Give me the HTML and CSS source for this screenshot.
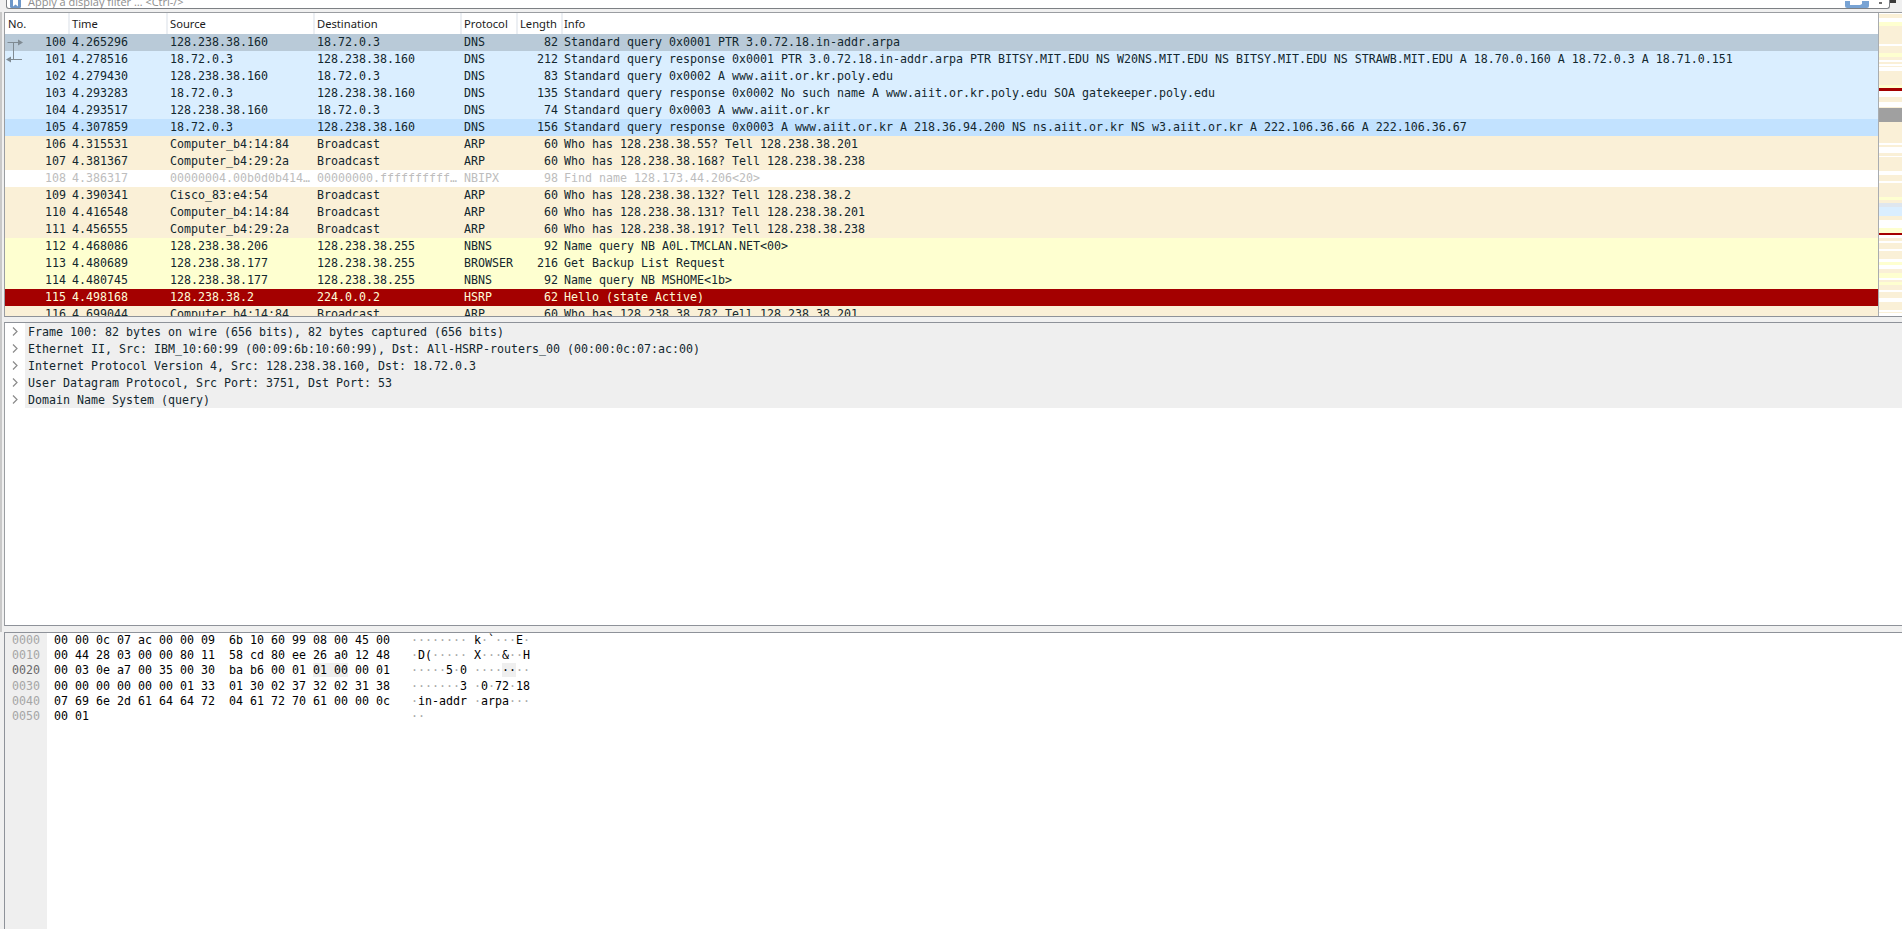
FILE: index.html
```html
<!DOCTYPE html>
<html lang="en">
<head>
<meta charset="utf-8">
<title>Wireshark</title>
<link rel="stylesheet" href="styles.css">
</head>
<body>
<div class="filterbar">
  <div class="filterbox">
    <svg class="bookmark" width="11" height="8" viewBox="0 0 11 8"><path d="M0 0h11v6.500a1.500 1.500 0 0 1-1.500 1.500h-8A1.500 1.500 0 0 1 0 6.500z" fill="#6d97c9"/><path d="M3 0h5v6.500L5.500 4.500 3 6.500z" fill="#fff"/></svg>
    <span class="placeholder">Apply a display filter … &lt;Ctrl-/&gt;</span>
    <svg class="applybtn" width="24" height="7" viewBox="0 0 24 7"><path d="M0 0h24v5a2 2 0 0 1-2 2H2a2 2 0 0 1-2-2z" fill="#78a3d4"/><path d="M5 0h12v3l-2 1H5z" fill="#fff"/></svg>
    <span class="dropdot"></span>
  </div>
  <span class="addbtn"></span>
</div>

<div class="upper">
  <section class="packets">
    <div class="plist">
      <div class="cols head"><span class="hno">No.</span><span>Time</span><span>Source</span><span>Destination</span><span>Protocol</span><span>Length</span><span class="hinfo">Info</span></div>
      <div class="cols row sel"><span class="no">100</span><span>4.265296</span><span>128.238.38.160</span><span>18.72.0.3</span><span>DNS</span><span class="len">82</span><span class="info">Standard query 0x0001 PTR 3.0.72.18.in-addr.arpa</span></div>
      <div class="cols row dns"><span class="no">101</span><span>4.278516</span><span>18.72.0.3</span><span>128.238.38.160</span><span>DNS</span><span class="len">212</span><span class="info">Standard query response 0x0001 PTR 3.0.72.18.in-addr.arpa PTR BITSY.MIT.EDU NS W20NS.MIT.EDU NS BITSY.MIT.EDU NS STRAWB.MIT.EDU A 18.70.0.160 A 18.72.0.3 A 18.71.0.151</span></div>
      <div class="cols row dns"><span class="no">102</span><span>4.279430</span><span>128.238.38.160</span><span>18.72.0.3</span><span>DNS</span><span class="len">83</span><span class="info">Standard query 0x0002 A www.aiit.or.kr.poly.edu</span></div>
      <div class="cols row dns"><span class="no">103</span><span>4.293283</span><span>18.72.0.3</span><span>128.238.38.160</span><span>DNS</span><span class="len">135</span><span class="info">Standard query response 0x0002 No such name A www.aiit.or.kr.poly.edu SOA gatekeeper.poly.edu</span></div>
      <div class="cols row dns"><span class="no">104</span><span>4.293517</span><span>128.238.38.160</span><span>18.72.0.3</span><span>DNS</span><span class="len">74</span><span class="info">Standard query 0x0003 A www.aiit.or.kr</span></div>
      <div class="cols row rel"><span class="no">105</span><span>4.307859</span><span>18.72.0.3</span><span>128.238.38.160</span><span>DNS</span><span class="len">156</span><span class="info">Standard query response 0x0003 A www.aiit.or.kr A 218.36.94.200 NS ns.aiit.or.kr NS w3.aiit.or.kr A 222.106.36.66 A 222.106.36.67</span></div>
      <div class="cols row arp"><span class="no">106</span><span>4.315531</span><span>Computer_b4:14:84</span><span>Broadcast</span><span>ARP</span><span class="len">60</span><span class="info">Who has 128.238.38.55? Tell 128.238.38.201</span></div>
      <div class="cols row arp"><span class="no">107</span><span>4.381367</span><span>Computer_b4:29:2a</span><span>Broadcast</span><span>ARP</span><span class="len">60</span><span class="info">Who has 128.238.38.168? Tell 128.238.38.238</span></div>
      <div class="cols row ign"><span class="no">108</span><span>4.386317</span><span>00000004.00b0d0b414…</span><span>00000000.ffffffffff…</span><span>NBIPX</span><span class="len">98</span><span class="info">Find name 128.173.44.206&lt;20&gt;</span></div>
      <div class="cols row arp"><span class="no">109</span><span>4.390341</span><span>Cisco_83:e4:54</span><span>Broadcast</span><span>ARP</span><span class="len">60</span><span class="info">Who has 128.238.38.132? Tell 128.238.38.2</span></div>
      <div class="cols row arp"><span class="no">110</span><span>4.416548</span><span>Computer_b4:14:84</span><span>Broadcast</span><span>ARP</span><span class="len">60</span><span class="info">Who has 128.238.38.131? Tell 128.238.38.201</span></div>
      <div class="cols row arp"><span class="no">111</span><span>4.456555</span><span>Computer_b4:29:2a</span><span>Broadcast</span><span>ARP</span><span class="len">60</span><span class="info">Who has 128.238.38.191? Tell 128.238.38.238</span></div>
      <div class="cols row smb"><span class="no">112</span><span>4.468086</span><span>128.238.38.206</span><span>128.238.38.255</span><span>NBNS</span><span class="len">92</span><span class="info">Name query NB A0L.TMCLAN.NET&lt;00&gt;</span></div>
      <div class="cols row smb"><span class="no">113</span><span>4.480689</span><span>128.238.38.177</span><span>128.238.38.255</span><span>BROWSER</span><span class="len">216</span><span class="info">Get Backup List Request</span></div>
      <div class="cols row smb"><span class="no">114</span><span>4.480745</span><span>128.238.38.177</span><span>128.238.38.255</span><span>NBNS</span><span class="len">92</span><span class="info">Name query NB MSHOME&lt;1b&gt;</span></div>
      <div class="cols row hsrp"><span class="no">115</span><span>4.498168</span><span>128.238.38.2</span><span>224.0.0.2</span><span>HSRP</span><span class="len">62</span><span class="info">Hello (state Active)</span></div>
      <div class="cols row arp"><span class="no">116</span><span>4.699044</span><span>Computer_b4:14:84</span><span>Broadcast</span><span>ARP</span><span class="len">60</span><span class="info">Who has 128.238.38.78? Tell 128.238.38.201</span></div>
      <svg class="related" width="20" height="26" viewBox="0 0 20 26"><path d="M1.500 4.500H13M7.500 4.500V21.500M4.500 21.500H16" fill="none" stroke="#7f8a92" stroke-width="1"/><path d="M12 1.500l5 3-5 3z" fill="#7f8a92"/><path d="M5 18.500l-5 3 5 3z" fill="#7f8a92"/></svg>
    </div>
    <div class="minimap">
      <i class="w" style="height:1px"></i><i class="t" style="height:4px"></i><i class="w" style="height:4px"></i><i class="y" style="height:4px"></i><i class="t" style="height:18px"></i><i class="w" style="height:2px"></i><i class="t" style="height:7px"></i><i class="y" style="height:4px"></i><i class="t" style="height:3px"></i><i class="w" style="height:2px"></i><i class="t" style="height:2px"></i><i class="w" style="height:2px"></i><i class="t" style="height:1px"></i><i class="w" style="height:4px"></i><i class="t" style="height:14px"></i><i class="y" style="height:3px"></i><i class="r" style="height:3px"></i><i class="w" style="height:6px"></i><i class="t" style="height:5px"></i><i class="w" style="height:5px"></i><i class="t" style="height:1px"></i><i class="g" style="height:14px"></i><i class="t" style="height:21px"></i><i class="w" style="height:2px"></i><i class="t" style="height:2px"></i><i class="w" style="height:6px"></i><i class="t" style="height:3px"></i><i class="w" style="height:1px"></i><i class="t" style="height:14px"></i><i class="w" style="height:4px"></i><i class="t" style="height:6px"></i><i class="w" style="height:2px"></i><i class="t" style="height:14px"></i><i class="y" style="height:3px"></i><i class="t" style="height:3px"></i><i class="l" style="height:4px"></i><i class="b" style="height:9px"></i><i class="t" style="height:4px"></i><i class="w" style="height:8px"></i><i class="y" style="height:5px"></i><i class="r" style="height:2px"></i><i class="w" style="height:3px"></i><i class="t" style="height:3px"></i><i class="w" style="height:2px"></i><i class="t" style="height:6px"></i><i class="w" style="height:2px"></i><i class="t" style="height:8px"></i><i class="w" style="height:3px"></i><i class="y" style="height:3px"></i><i class="w" style="height:4px"></i><i class="t" style="height:4px"></i><i class="y" style="height:5px"></i><i class="w" style="height:2px"></i><i class="t" style="height:2px"></i><i class="y" style="height:3px"></i><i class="t" style="height:5px"></i><i class="w" style="height:2px"></i><i class="t" style="height:6px"></i><i class="w" style="height:4px"></i><i class="t" style="height:8px"></i><i class="w" style="height:2px"></i><i class="t" style="height:1px"></i><i class="w" style="height:2px"></i>
    </div>
  </section>

  <section class="details">
    <div class="tree"><svg class="chev" width="6" height="9" viewBox="0 0 6 9"><path d="M1 .5l4 4-4 4" fill="none" stroke="#8a8a8a" stroke-width="1.200"/></svg><span class="node">Frame 100: 82 bytes on wire (656 bits), 82 bytes captured (656 bits)</span></div>
    <div class="tree"><svg class="chev" width="6" height="9" viewBox="0 0 6 9"><path d="M1 .5l4 4-4 4" fill="none" stroke="#8a8a8a" stroke-width="1.200"/></svg><span class="node">Ethernet II, Src: IBM_10:60:99 (00:09:6b:10:60:99), Dst: All-HSRP-routers_00 (00:00:0c:07:ac:00)</span></div>
    <div class="tree"><svg class="chev" width="6" height="9" viewBox="0 0 6 9"><path d="M1 .5l4 4-4 4" fill="none" stroke="#8a8a8a" stroke-width="1.200"/></svg><span class="node">Internet Protocol Version 4, Src: 128.238.38.160, Dst: 18.72.0.3</span></div>
    <div class="tree"><svg class="chev" width="6" height="9" viewBox="0 0 6 9"><path d="M1 .5l4 4-4 4" fill="none" stroke="#8a8a8a" stroke-width="1.200"/></svg><span class="node">User Datagram Protocol, Src Port: 3751, Dst Port: 53</span></div>
    <div class="tree"><svg class="chev" width="6" height="9" viewBox="0 0 6 9"><path d="M1 .5l4 4-4 4" fill="none" stroke="#8a8a8a" stroke-width="1.200"/></svg><span class="node">Domain Name System (query)</span></div>
  </section>
</div>

<section class="bytes">
  <div class="offsets"><div>0000</div><div>0010</div><div class="cur">0020</div><div>0030</div><div>0040</div><div>0050</div></div>
  <div class="hexcol"><div>00 00 0c 07 ac 00 00 09  6b 10 60 99 08 00 45 00</div><div>00 44 28 03 00 00 80 11  58 cd 80 ee 26 a0 12 48</div><div>00 03 0e a7 00 35 00 30  ba b6 00 01 <b class="hl">01 00</b> 00 01</div><div>00 00 00 00 00 00 01 33  01 30 02 37 32 02 31 38</div><div>07 69 6e 2d 61 64 64 72  04 61 72 70 61 00 00 0c</div><div>00 01</div></div>
  <div class="asciicol"><div><u>········</u> k<u>·</u>`<u>···</u>E<u>·</u></div><div><u>·</u>D(<u>·····</u> X<u>···</u>&amp;<u>··</u>H</div><div><u>·····</u>5<u>·</u>0 <u>····</u><b class="hl">··</b><u>··</u></div><div><u>·······</u>3 <u>·</u>0<u>·</u>72<u>·</u>18</div><div><u>·</u>in-addr <u>·</u>arpa<u>···</u></div><div><u>··</u></div></div>
</section>
</body>
</html>
```
FILE: styles.css
```css
* { box-sizing: border-box; }
html, body { margin: 0; height: 100%; }
body {
  width: 1902px;
  height: 929px;
  overflow: hidden;
  background: #f0f0f0;
  color: #12272e;
  font-family: "DejaVu Sans Mono", monospace;
  font-size: 11.63px;
}

/* display filter, cut off by the top edge */
.filterbar {
  height: 12px;
  display: flex;
  align-items: flex-start;
  padding-left: 6px;
}
.filterbox {
  width: 1884px;
  height: 9px;
  display: flex;
  align-items: flex-end;
  padding-left: 3px;
  background: #fff;
  border: 1px solid #7d8084;
  border-top: 0;
  border-radius: 0 0 3px 3px;
  overflow: hidden;
}
.bookmark { flex: none; }
.placeholder {
  flex: 1;
  margin-left: 7px;
  height: 8px;
  line-height: 1;
  font-family: "Open Sans", sans-serif;
  font-size: 11px;
  color: #8d8d8d;
  display: flex;
  align-items: flex-end;
  padding-bottom: 1px;
}
.applybtn { flex: none; margin-right: 10px; }
.dropdot {
  width: 3px;
  height: 2px;
  margin: 0 7px 4px 0;
  background: #6e6e6e;
}
.addbtn {
  width: 6px;
  height: 3px;
  background: #3a3a3a;
  align-self: flex-start;
}

/* upper two panes share the grey strip on the left edge */
.upper {
  border-left: 2px solid #c9c9c9;
  padding-left: 2px;
  height: 620px;
}

.packets {
  display: flex;
  height: 305px;
  background: #fff;
  border-top: 1px solid #9a9da1;
  border-left: 1px solid #9a9da1;
  border-bottom: 1px solid #8e9299;
}
.plist {
  position: relative;
  flex: 1;
  min-width: 0;
  overflow: hidden;
  border-right: 1px solid #a9acb0;
}
.cols {
  display: grid;
  grid-template-columns: 63px 98px 147px 147px 56px 45px 1fr;
  white-space: nowrap;
}
.cols > span { padding-left: 4px; overflow: hidden; }
.head {
  height: 21px;
  align-items: stretch;
  font-family: "Noto Sans", sans-serif;
  font-size: 11.200px;
  line-height: 21px;
  background: #fff;
  color: #1a1a1a;
}
.head > span + span { border-left: 2px solid #eceff3; padding-left: 2px; }
.head > .hno { padding-left: 3px; }
.cols > .hinfo { padding-left: 1px; }
.row { height: 17px; line-height: 17px; }
.row > .no { padding: 0 2px 0 0; text-align: right; }
.row > .len { padding: 0 3px 0 0; text-align: right; }
.row > .info { padding-left: 3px; }
.sel { background: #b9cad8; }
.dns { background: #daeeff; }
.rel { background: #c2e2ff; }
.arp { background: #faf0d7; }
.ign { background: #fff; color: #bdbdbd; }
.smb { background: #feffd0; }
.hsrp { background: #a40000; color: #fffcd8; }
.related {
  position: absolute;
  left: 1px;
  top: 25px;
  overflow: visible;
}

.minimap {
  flex: none;
  width: 23px;
  display: flex;
  flex-direction: column;
  background: #fff;
}
.minimap i { display: block; flex: none; }
.minimap .w { background: #fff; }
.minimap .t { background: #faf0d7; }
.minimap .y { background: #feffd0; }
.minimap .r { background: #a40000; }
.minimap .g { background: #a0a0a0; }
.minimap .l { background: #dfe6ee; }
.minimap .b { background: #daeeff; }

.details {
  height: 304px;
  margin-top: 5px;
  background: #fff;
  border-top: 1px solid #8e9299;
  border-left: 1px solid #9a9da1;
  border-bottom: 1px solid #8e9299;
}
.tree {
  display: flex;
  align-items: center;
  height: 17px;
  line-height: 18px;
  white-space: nowrap;
}
.chev { flex: none; margin: 0 7px 0 7px; }
.node {
  flex: 1;
  height: 17px;
  padding-left: 3px;
  background: #efefef;
}

.bytes {
  display: flex;
  height: 298px;
  margin-left: 4px;
  background: #fff;
  border-top: 1px solid #8e9299;
  border-left: 1px solid #8e9299;
  line-height: 15.200px;
  color: #000;
  white-space: pre;
}
.offsets {
  flex: none;
  width: 42px;
  padding-left: 7px;
  background: #efefef;
  color: #a6a6a6;
}
.offsets .cur { color: #6a6a6a; }
.hexcol {
  flex: none;
  width: 364px;
  padding-left: 7px;
}
.asciicol { flex: 1; }
.hl { font-weight: normal; background: #efefef; }
.asciicol u { text-decoration: none; color: #a8a8a8; }
.asciicol .hl { color: #000; }
```
